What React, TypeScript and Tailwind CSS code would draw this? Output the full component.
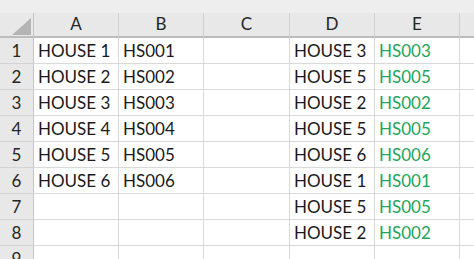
import React from "react";

const cols = ["A", "B", "C", "D", "E"];

const rows: (string | { text: string; green?: boolean })[][] = [
  ["HOUSE 1", "HS001", "", "HOUSE 3", { text: "HS003", green: true }],
  ["HOUSE 2", "HS002", "", "HOUSE 5", { text: "HS005", green: true }],
  ["HOUSE 3", "HS003", "", "HOUSE 2", { text: "HS002", green: true }],
  ["HOUSE 4", "HS004", "", "HOUSE 5", { text: "HS005", green: true }],
  ["HOUSE 5", "HS005", "", "HOUSE 6", { text: "HS006", green: true }],
  ["HOUSE 6", "HS006", "", "HOUSE 1", { text: "HS001", green: true }],
  ["", "", "", "HOUSE 5", { text: "HS005", green: true }],
  ["", "", "", "HOUSE 2", { text: "HS002", green: true }],
  ["", "", "", "", ""],
];

export default function App() {
  return (
    <div
      className="w-[474px] h-[259px] overflow-hidden bg-white text-[#1a1a1a]"
      style={{ fontFamily: "Lato, 'Liberation Sans', sans-serif" }}
    >
      {/* strip above the column headers */}
      <div className="h-[13px] bg-[#eeeeee]" />
      <div className="grid grid-cols-[34px_85px_85px_86px_85px_85px_1fr] grid-rows-[25px] auto-rows-[26px]">
        {/* select-all corner */}
        <div className="relative bg-[#e8e8e8] border-r border-b-2 border-r-[#c6c6c6] border-b-[#bdbdbd]">
          <svg className="absolute left-[12px] top-[5px]" width="19" height="17" viewBox="0 0 19 17">
            <polygon points="19,0 19,17 0,17" fill="#b4b4b4" />
          </svg>
        </div>
        {cols.map((c) => (
          <div
            key={c}
            className="flex items-end justify-center pb-[1px] bg-[#e8e8e8] border-r border-b-2 border-r-[#cfcfcf] border-b-[#bdbdbd] text-[17px] leading-[22px] text-[#262626]"
          >
            {c}
          </div>
        ))}
        <div className="bg-[#e8e8e8] border-b-2 border-b-[#bdbdbd]" />

        {rows.map((r, i) => (
          <React.Fragment key={i}>
            <div className="flex items-center justify-center bg-[#e8e8e8] border-r border-b border-r-[#c6c6c6] border-b-[#d4d4d4] text-[17px] text-[#262626]">
              {i + 1}
            </div>
            {r.map((cell, j) => {
              const text = typeof cell === "string" ? cell : cell.text;
              const green = typeof cell !== "string" && cell.green;
              return (
                <div
                  key={j}
                  className={`flex items-center pl-[4px] border-r border-b border-[#d9d9d9] text-[17px] whitespace-nowrap ${
                    green ? "text-[#22a55a]" : "text-[#1a1a1a]"
                  }`}
                >
                  {text}
                </div>
              );
            })}
            <div className="border-b border-[#d9d9d9]" />
          </React.Fragment>
        ))}
      </div>
    </div>
  );
}
